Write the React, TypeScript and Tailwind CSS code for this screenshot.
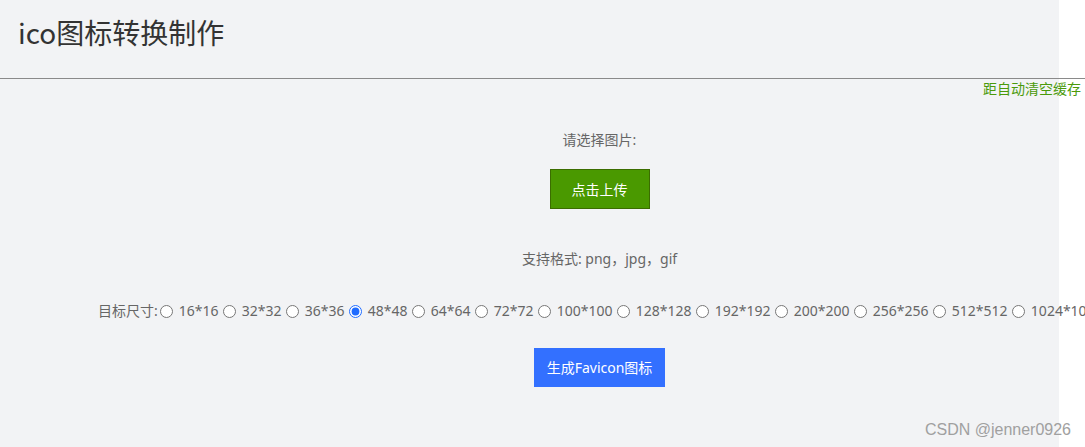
import React from "react";

const sizes = ["16*16","32*32","36*36","48*48","64*64","72*72","100*100","128*128","192*192","200*200","256*256","512*512","1024*1024"];

export default function App() {
  return (
    <div
      className="relative w-[1085px] h-[447px] overflow-hidden bg-[linear-gradient(to_right,#f2f3f5_1059px,#ffffff_1059px)]"
      style={{ fontFamily: '"Noto Sans", "Noto Sans CJK SC", sans-serif' }}
    >
      <div className="h-[78px] pl-[18px] pt-[12px]">
        <h1 className="text-[28px] leading-[40px] text-[#333]" style={{ fontFamily: '"Noto Sans CJK SC", sans-serif' }}>ico图标转换制作</h1>
      </div>
      <div className="border-t border-[#8a8a8a]" />
      <div className="pr-[4px] text-right text-[14px] leading-[20px] text-[#4a9a0a]">距自动清空缓存</div>
      <div className="ml-[98px] w-[1003px] flex flex-col items-center">
        <div className="mt-[31px] text-[14px] leading-[20px] text-[#666]">请选择图片:</div>
        <button className="mt-[19px] w-[100px] h-[40px] bg-[#4a9900] border border-[#3b6d00] text-white text-[14px]">点击上传</button>
        <div className="mt-[40px] text-[14px] leading-[20px] text-[#666]">支持格式: png，jpg，gif</div>
        <div className="self-start mt-[32px] flex items-center whitespace-nowrap text-[14px] leading-[20px] text-[#666]">
          <span>目标尺寸:</span>
          {sizes.map((s, i) => (
            <label key={s} className="flex items-center">
              <input
                type="radio"
                name="size"
                defaultChecked={s === "48*48"}
                className={`w-[13px] h-[13px] m-0 mr-[6px] accent-[#1f6bff] ${i === 0 ? "ml-[2px]" : "ml-[4.25px]"}`}
              />
              <span>{s}</span>
            </label>
          ))}
        </div>
        <button className="mt-[27px] w-[131px] h-[39px] bg-[#3370ff] text-white text-[14px]">生成Favicon图标</button>
      </div>
      <div className="absolute right-[14px] bottom-[7px] text-[16px] leading-[20px] text-[#a0a0a0]" style={{ fontFamily: '"Liberation Sans", Arial, sans-serif' }}>CSDN @jenner0926</div>
    </div>
  );
}
